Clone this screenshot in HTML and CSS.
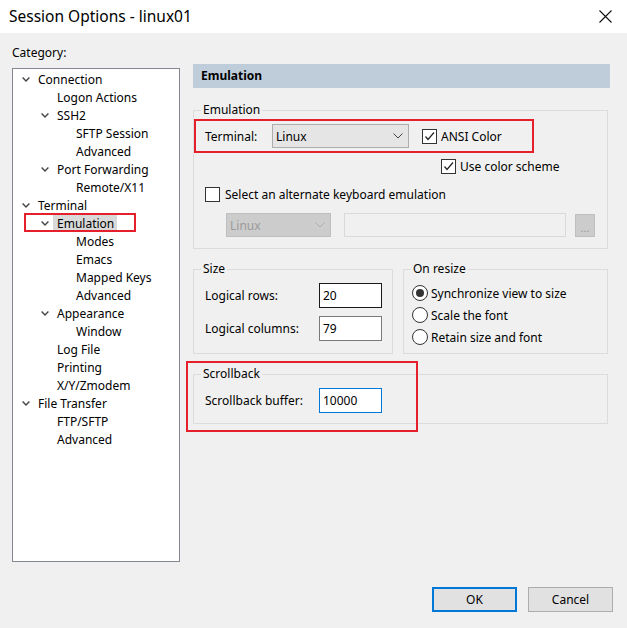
FILE: index.html
```html
<!DOCTYPE html>
<html>
<head>
<meta charset="utf-8">
<title>Session Options - linux01</title>
<link rel="stylesheet" href="styles.css">
</head>
<body>
<div class="titlebar">
  <span class="title">Session Options - linux01</span>
  <svg class="close" width="13" height="13" viewBox="0 0 13 13"><path d="M0.5 0.5L12.5 12.5M12.5 0.5L0.5 12.5" stroke="#111" stroke-width="1.1" fill="none"/></svg>
</div>
<div class="main">
  <div class="left">
    <div class="cat-label">Category:</div>
    <div class="tree">
      <div class="row l0"><span class="chev"><svg width="8" height="5" viewBox="0 0 8 5"><path d="M0.6 0.6L4 4L7.4 0.6" fill="none" stroke="#444" stroke-width="1.4"/></svg></span><span class="lbl">Connection</span></div>
      <div class="row l1"><span class="chev"></span><span class="lbl">Logon Actions</span></div>
      <div class="row l1"><span class="chev"><svg width="8" height="5" viewBox="0 0 8 5"><path d="M0.6 0.6L4 4L7.4 0.6" fill="none" stroke="#444" stroke-width="1.4"/></svg></span><span class="lbl">SSH2</span></div>
      <div class="row l2"><span class="chev"></span><span class="lbl">SFTP Session</span></div>
      <div class="row l2"><span class="chev"></span><span class="lbl">Advanced</span></div>
      <div class="row l1"><span class="chev"><svg width="8" height="5" viewBox="0 0 8 5"><path d="M0.6 0.6L4 4L7.4 0.6" fill="none" stroke="#444" stroke-width="1.4"/></svg></span><span class="lbl">Port Forwarding</span></div>
      <div class="row l2"><span class="chev"></span><span class="lbl">Remote/X11</span></div>
      <div class="row l0"><span class="chev"><svg width="8" height="5" viewBox="0 0 8 5"><path d="M0.6 0.6L4 4L7.4 0.6" fill="none" stroke="#444" stroke-width="1.4"/></svg></span><span class="lbl">Terminal</span></div>
      <div class="row l1"><span class="chev"><svg width="8" height="5" viewBox="0 0 8 5"><path d="M0.6 0.6L4 4L7.4 0.6" fill="none" stroke="#444" stroke-width="1.4"/></svg></span><span class="lbl sel">Emulation</span></div>
      <div class="row l2"><span class="chev"></span><span class="lbl">Modes</span></div>
      <div class="row l2"><span class="chev"></span><span class="lbl">Emacs</span></div>
      <div class="row l2"><span class="chev"></span><span class="lbl">Mapped Keys</span></div>
      <div class="row l2"><span class="chev"></span><span class="lbl">Advanced</span></div>
      <div class="row l1"><span class="chev"><svg width="8" height="5" viewBox="0 0 8 5"><path d="M0.6 0.6L4 4L7.4 0.6" fill="none" stroke="#444" stroke-width="1.4"/></svg></span><span class="lbl">Appearance</span></div>
      <div class="row l2"><span class="chev"></span><span class="lbl">Window</span></div>
      <div class="row l1"><span class="chev"></span><span class="lbl">Log File</span></div>
      <div class="row l1"><span class="chev"></span><span class="lbl">Printing</span></div>
      <div class="row l1"><span class="chev"></span><span class="lbl">X/Y/Zmodem</span></div>
      <div class="row l0"><span class="chev"><svg width="8" height="5" viewBox="0 0 8 5"><path d="M0.6 0.6L4 4L7.4 0.6" fill="none" stroke="#444" stroke-width="1.4"/></svg></span><span class="lbl">File Transfer</span></div>
      <div class="row l1"><span class="chev"></span><span class="lbl">FTP/SFTP</span></div>
      <div class="row l1"><span class="chev"></span><span class="lbl">Advanced</span></div>
      <div class="mark mark-tree"></div>
    </div>
  </div>

  <div class="right">
    <div class="header">Emulation</div>

    <fieldset class="group g-emu">
      <legend>Emulation</legend>
      <div class="emu-row1">
        <span class="flabel w67">Terminal:</span>
        <div class="select s-term"><span>Linux</span><svg width="10" height="6" viewBox="0 0 10 6"><path d="M0.5 0.5L5 5L9.5 0.5" fill="none" stroke="#444" stroke-width="1"/></svg></div>
        <span class="cb ml13"><svg width="13" height="13" viewBox="0 0 13 13"><path d="M2.5 6.5L5 9.5L11 2.5" fill="none" stroke="#222" stroke-width="1.2"/></svg></span>
        <span class="cbtext">ANSI Color</span>
      </div>
      <div class="emu-row2">
        <span class="cb"><svg width="13" height="13" viewBox="0 0 13 13"><path d="M2.5 6.5L5 9.5L11 2.5" fill="none" stroke="#222" stroke-width="1.2"/></svg></span>
        <span class="cbtext">Use color scheme</span>
      </div>
      <div class="emu-row3">
        <span class="cb"></span>
        <span class="cbtext t5">Select an alternate keyboard emulation</span>
      </div>
      <div class="emu-row4">
        <div class="select dis s-alt"><span>Linux</span><svg width="10" height="6" viewBox="0 0 10 6"><path d="M0.5 0.5L5 5L9.5 0.5" fill="none" stroke="#b0b0b0" stroke-width="1"/></svg></div>
        <div class="textdis"></div>
        <div class="dots">...</div>
      </div>
    </fieldset>

    <div class="pair">
      <fieldset class="group g-size">
        <legend>Size</legend>
        <div class="field-row first">
          <span class="flabel w114">Logical rows:</span>
          <span class="input dark">20</span>
        </div>
        <div class="field-row second">
          <span class="flabel w114">Logical columns:</span>
          <span class="input">79</span>
        </div>
      </fieldset>
      <fieldset class="group g-resize">
        <legend>On resize</legend>
        <div class="radio-row first"><span class="radio on"></span><span class="rtext">Synchronize view to size</span></div>
        <div class="radio-row"><span class="radio"></span><span class="rtext">Scale the font</span></div>
        <div class="radio-row"><span class="radio"></span><span class="rtext">Retain size and font</span></div>
      </fieldset>
    </div>

    <fieldset class="group g-scroll">
      <legend>Scrollback</legend>
      <div class="field-row first last">
        <span class="flabel w114">Scrollback buffer:</span>
        <span class="input focus">10000</span>
      </div>
    </fieldset>

    <div class="mark mark-term"></div>
    <div class="mark mark-scroll"></div>
  </div>
</div>
<div class="footer">
  <button class="btn default">OK</button>
  <button class="btn">Cancel</button>
</div>
</body>
</html>
```

FILE: styles.css
```css
* { box-sizing: border-box; }
html, body { margin: 0; padding: 0; }
body {
  width: 627px;
  height: 628px;
  overflow: hidden;
  background: #f0f0f0;
  font-family: "Noto Sans", "Open Sans", sans-serif;
  font-size: 12px;
  color: #000;
}

.titlebar {
  height: 33px;
  background: #fff;
  display: flex;
  align-items: center;
  justify-content: space-between;
  padding: 0 15px 0 9px;
}
.title { font-size: 15.5px; line-height: 20px; margin-top: -1px; }
.close { display: block; }

.main { display: flex; align-items: flex-start; padding-top: 12px; }

.left { margin-left: 12px; width: 168px; }
.cat-label { height: 16px; line-height: 16px; }
.tree {
  position: relative;
  margin-top: 7px;
  height: 494px;
  background: #fff;
  border: 1px solid #828790;
  padding-top: 1px;
}
.row { height: 18px; display: flex; align-items: center; }
.row.l0 { padding-left: 9px; }
.row.l1 { padding-left: 28px; }
.row.l2 { padding-left: 47px; }
.chev { width: 12px; height: 18px; display: flex; align-items: center; }
.chev svg { display: block; margin-top: 1px; }
.lbl { padding: 0 3px 0 4px; line-height: 17px; white-space: nowrap; }
.lbl.sel { background: #d9d9d9; }

.mark { position: absolute; border: 2px solid #e5202c; }
.mark-tree { left: 11px; top: 144px; width: 112px; height: 19px; }

.right { position: relative; margin-left: 13px; margin-top: 19px; width: 417px; }
.header {
  height: 24px;
  line-height: 24px;
  background: #bfcddb;
  font-weight: bold;
  padding-left: 8px;
}

.group {
  margin: 0;
  padding: 0;
  min-width: 0;
  border: 1px solid #dcdcdc;
}
.group legend {
  margin-left: 7px;
  padding: 0 2px;
  line-height: 16px;
  height: 16px;
}
.g-emu { width: 415px; margin-top: 14px; }

.emu-row1 { display: flex; align-items: center; height: 24px; margin-top: 6px; padding-left: 11px; }
.emu-row2 { display: flex; align-items: center; height: 16px; margin-top: 10px; padding-left: 247px; }
.emu-row3 { display: flex; align-items: center; height: 16px; margin-top: 12px; padding-left: 11px; }
.emu-row4 { display: flex; align-items: center; height: 24px; margin-top: 11px; margin-bottom: 11px; padding-left: 32px; }

.flabel { white-space: nowrap; }
.w67 { width: 67px; }
.w114 { width: 114px; }

.select {
  display: flex;
  align-items: center;
  justify-content: space-between;
  height: 24px;
  border: 1px solid #adadad;
  background: #e5e5e5;
  padding: 0 5px 0 3px;
}
.select svg { display: block; }
.s-term { width: 137px; }
.s-alt { width: 105px; }
.select.dis { background: #cccccc; border-color: #bfbfbf; color: #9a9a9a; }

.cb {
  width: 15px;
  height: 15px;
  border: 1px solid #333;
  background: #fff;
  display: flex;
  align-items: center;
  justify-content: center;
  flex: none;
}
.cb svg { display: block; }
.ml13 { margin-left: 13px; }
.cbtext { margin-left: 4px; white-space: nowrap; }
.cbtext.t5 { margin-left: 5px; }

.textdis {
  margin-left: 13px;
  width: 222px;
  height: 24px;
  border: 1px solid #d9d9d9;
  background: #f0f0f0;
}
.dots {
  margin-left: 9px;
  width: 20px;
  height: 23px;
  background: #cccccc;
  border: 1px solid #bfbfbf;
  color: #9a9a9a;
  text-align: center;
  line-height: 26px;
  font-size: 11px;
}

.pair { display: flex; gap: 10px; margin-top: 12px; }
.g-size { width: 200px; }
.g-resize { width: 205px; }

.field-row { display: flex; align-items: center; height: 25px; padding-left: 11px; }
.field-row.first { margin-top: 6px; }
.field-row.second { margin-top: 8px; margin-bottom: 12px; }
.field-row.last { margin-bottom: 10px; }
.input {
  width: 63px;
  height: 25px;
  line-height: 23px;
  border: 1px solid #7a7a7a;
  background: #fff;
  padding-left: 3px;
}
.input.dark { border-color: #1a1a1a; }
.input.focus { border-color: #0078d7; }

.radio-row { display: flex; align-items: center; height: 22px; padding-left: 8px; }
.radio-row.first { margin-top: 5px; }
.radio {
  width: 16px;
  height: 16px;
  border: 1px solid #333;
  border-radius: 50%;
  background: #fff;
  display: flex;
  align-items: center;
  justify-content: center;
  flex: none;
}
.radio.on::after {
  content: "";
  width: 8px;
  height: 8px;
  border-radius: 50%;
  background: #333;
}
.rtext { margin-left: 3px; white-space: nowrap; }

.g-scroll { width: 415px; margin-top: 12px; }

.mark-term { left: 1px; top: 55px; width: 340px; height: 34px; }
.mark-scroll { left: -7px; top: 297px; width: 232px; height: 71px; }

.footer {
  display: flex;
  justify-content: flex-end;
  gap: 11px;
  padding-right: 14px;
  margin-top: 25px;
}
.btn {
  width: 85px;
  height: 25px;
  font-family: inherit;
  font-size: 12px;
  color: #000;
  background: #e1e1e1;
  border: 1px solid #adadad;
  padding: 0;
  margin: 0;
}
.btn.default { border: 2px solid #0078d7; }
```
